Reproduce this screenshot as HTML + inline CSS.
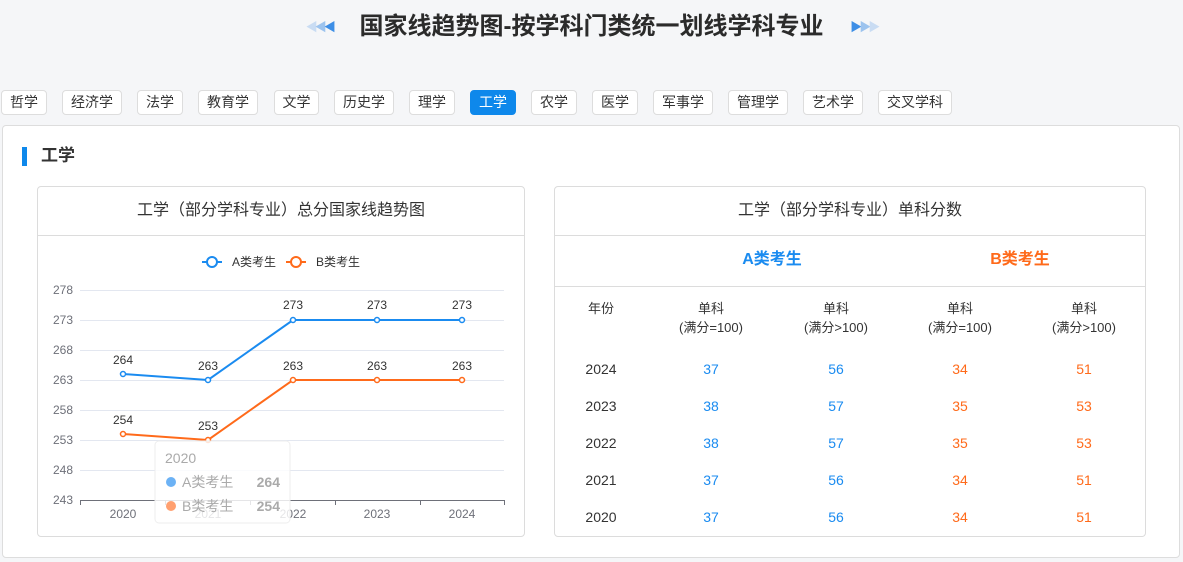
<!DOCTYPE html>
<html><head><meta charset="utf-8"><style>
*{margin:0;padding:0;box-sizing:border-box}
body{width:1183px;height:562px;background:#f5f6f8;font-family:"Liberation Sans","Noto Sans CJK SC",sans-serif;color:#333;position:relative;overflow:hidden}
.a{position:absolute;white-space:nowrap}
.title{left:0;width:1183px;top:12px;text-align:center;font-size:24px;font-weight:bold;color:#2b2b2b;line-height:30px}
.tab{position:absolute;top:90px;height:25px;border:1px solid #ddd;border-radius:4px;background:#fff;font-size:14px;line-height:23px;text-align:center;color:#333}
.tab.on{background:#0e88eb;border-color:#0e88eb;color:#fff}
.card{left:2px;top:125px;width:1178px;height:433px;background:#fff;border:1px solid #ddd;border-radius:4px}
.panel{background:#fff;border:1px solid #dcdcdc;border-radius:4px}
.c{text-align:center;transform:translateX(-50%)}
.bl{color:#1a8bf0}.or{color:#ff6a1a}
</style></head><body>
<div class="a title"><span style="font-size:12px;letter-spacing:-3px;vertical-align:3px"><span style="color:#c9dcf3">◀</span><span style="color:#9cc3ee">◀</span><span style="color:#3d8ee6">◀</span></span>&nbsp;&nbsp;&nbsp;&nbsp;国家线趋势图-按学科门类统一划线学科专业&nbsp;&nbsp;&nbsp;&nbsp;<span style="font-size:12px;letter-spacing:-3px;vertical-align:3px"><span style="color:#3d8ee6">▶</span><span style="color:#9cc3ee">▶</span><span style="color:#c9dcf3">▶</span></span></div>

<div class="tab" style="left:1px;width:46px">哲学</div>
<div class="tab" style="left:62px;width:60px">经济学</div>
<div class="tab" style="left:137px;width:46px">法学</div>
<div class="tab" style="left:198px;width:60px">教育学</div>
<div class="tab" style="left:274px;width:45px">文学</div>
<div class="tab" style="left:334px;width:60px">历史学</div>
<div class="tab" style="left:409px;width:46px">理学</div>
<div class="tab on" style="left:470px;width:46px">工学</div>
<div class="tab" style="left:531px;width:46px">农学</div>
<div class="tab" style="left:592px;width:46px">医学</div>
<div class="tab" style="left:653px;width:60px">军事学</div>
<div class="tab" style="left:728px;width:60px">管理学</div>
<div class="tab" style="left:803px;width:60px">艺术学</div>
<div class="tab" style="left:878px;width:74px">交叉学科</div>

<div class="a card"></div>
<div class="a" style="left:22px;top:147px;width:5px;height:19px;background:#0e88eb"></div>
<div class="a" style="left:41px;top:145px;font-size:17px;font-weight:bold;line-height:22px">工学</div>

<div class="a panel" style="left:37px;top:186px;width:488px;height:351px"></div>
<div class="a" style="left:38px;top:235px;width:486px;height:1px;background:#dcdcdc"></div>
<div class="a c" style="left:281px;top:200px;font-size:16px;line-height:22px;color:#333">工学（部分学科专业）总分国家线趋势图</div>

<svg class="a" style="left:0;top:0" width="560" height="562" font-family="Liberation Sans, Noto Sans CJK SC, sans-serif">
<g stroke="#e3e7f0" stroke-width="1">
<line x1="80" x2="504" y1="290.5" y2="290.5"/><line x1="80" x2="504" y1="320.5" y2="320.5"/><line x1="80" x2="504" y1="350.5" y2="350.5"/><line x1="80" x2="504" y1="380.5" y2="380.5"/><line x1="80" x2="504" y1="410.5" y2="410.5"/><line x1="80" x2="504" y1="440.5" y2="440.5"/><line x1="80" x2="504" y1="470.5" y2="470.5"/>
</g>
<g stroke="#6e7079" stroke-width="1"><line x1="80" x2="504" y1="500.5" y2="500.5"/>
<line x1="80.5" x2="80.5" y1="500" y2="505"/><line x1="165.5" x2="165.5" y1="500" y2="505"/><line x1="250.5" x2="250.5" y1="500" y2="505"/><line x1="335.5" x2="335.5" y1="500" y2="505"/><line x1="420.5" x2="420.5" y1="500" y2="505"/><line x1="504.5" x2="504.5" y1="500" y2="505"/></g>
<g font-size="12" fill="#6e7079" text-anchor="end">
<text x="73" y="294">278</text><text x="73" y="324">273</text><text x="73" y="354">268</text><text x="73" y="384">263</text><text x="73" y="414">258</text><text x="73" y="444">253</text><text x="73" y="474">248</text><text x="73" y="504">243</text></g>
<g font-size="12" fill="#6e7079" text-anchor="middle">
<text x="123" y="518">2020</text><text x="208" y="518">2021</text><text x="293" y="518">2022</text><text x="377" y="518">2023</text><text x="462" y="518">2024</text></g>
<polyline points="123,374 208,380 293,320 377,320 462,320" fill="none" stroke="#1a8bf0" stroke-width="2"/>
<polyline points="123,434 208,440 293,380 377,380 462,380" fill="none" stroke="#ff6a1a" stroke-width="2"/>
<g fill="#fff" stroke="#1a8bf0" stroke-width="1.5"><circle cx="123" cy="374" r="2.5"/><circle cx="208" cy="380" r="2.5"/><circle cx="293" cy="320" r="2.5"/><circle cx="377" cy="320" r="2.5"/><circle cx="462" cy="320" r="2.5"/></g>
<g fill="#fff" stroke="#ff6a1a" stroke-width="1.5"><circle cx="123" cy="434" r="2.5"/><circle cx="208" cy="440" r="2.5"/><circle cx="293" cy="380" r="2.5"/><circle cx="377" cy="380" r="2.5"/><circle cx="462" cy="380" r="2.5"/></g>
<g font-size="12" fill="#333" text-anchor="middle">
<text x="123" y="364">264</text><text x="208" y="370">263</text><text x="293" y="309">273</text><text x="377" y="309">273</text><text x="462" y="309">273</text>
<text x="123" y="424">254</text><text x="208" y="430">253</text><text x="293" y="370">263</text><text x="377" y="370">263</text><text x="462" y="370">263</text></g>
<line x1="202" x2="222" y1="262" y2="262" stroke="#1a8bf0" stroke-width="2"/><circle cx="212" cy="262" r="5" fill="#fff" stroke="#1a8bf0" stroke-width="2"/>
<text x="232" y="266" font-size="12" fill="#333">A类考生</text>
<line x1="286" x2="306" y1="262" y2="262" stroke="#ff6a1a" stroke-width="2"/><circle cx="296" cy="262" r="5" fill="#fff" stroke="#ff6a1a" stroke-width="2"/>
<text x="316" y="266" font-size="12" fill="#333">B类考生</text>
<rect x="155" y="441" width="135" height="82" rx="4" fill="#fff" fill-opacity="0.82" stroke="#eee"/>
<text x="165" y="463" font-size="14" fill="#aaa">2020</text>
<circle cx="171" cy="482" r="5" fill="#6cb2f5"/><text x="182" y="487" font-size="14" fill="#aaa">A类考生</text><text x="280" y="487" font-size="14" font-weight="bold" fill="#aaa" text-anchor="end">264</text>
<circle cx="171" cy="506" r="5" fill="#ffa070"/><text x="182" y="511" font-size="14" fill="#aaa">B类考生</text><text x="280" y="511" font-size="14" font-weight="bold" fill="#aaa" text-anchor="end">254</text>
</svg>

<div class="a panel" style="left:554px;top:186px;width:592px;height:351px"></div>
<div class="a" style="left:555px;top:235px;width:590px;height:1px;background:#dcdcdc"></div>
<div class="a" style="left:555px;top:286px;width:590px;height:1px;background:#dcdcdc"></div>
<div class="a c" style="left:850px;top:200px;font-size:16px;line-height:22px">工学（部分学科专业）单科分数</div>
<div class="a c bl" style="left:772px;top:249px;font-size:16px;font-weight:bold;line-height:22px">A类考生</div>
<div class="a c or" style="left:1020px;top:249px;font-size:16px;font-weight:bold;line-height:22px">B类考生</div>

<div class="a c" style="left:601px;top:299px;font-size:13px;line-height:19px">年份</div>
<div class="a c" style="left:711px;top:299px;font-size:13px;line-height:19px">单科<br>(满分=100)</div>
<div class="a c" style="left:836px;top:299px;font-size:13px;line-height:19px">单科<br>(满分&gt;100)</div>
<div class="a c" style="left:960px;top:299px;font-size:13px;line-height:19px">单科<br>(满分=100)</div>
<div class="a c" style="left:1084px;top:299px;font-size:13px;line-height:19px">单科<br>(满分&gt;100)</div>

<div style="font-size:14px;line-height:18px">
<div class="a c" style="left:601px;top:360px">2024</div><div class="a c bl" style="left:711px;top:360px">37</div><div class="a c bl" style="left:836px;top:360px">56</div><div class="a c or" style="left:960px;top:360px">34</div><div class="a c or" style="left:1084px;top:360px">51</div>
<div class="a c" style="left:601px;top:397px">2023</div><div class="a c bl" style="left:711px;top:397px">38</div><div class="a c bl" style="left:836px;top:397px">57</div><div class="a c or" style="left:960px;top:397px">35</div><div class="a c or" style="left:1084px;top:397px">53</div>
<div class="a c" style="left:601px;top:434px">2022</div><div class="a c bl" style="left:711px;top:434px">38</div><div class="a c bl" style="left:836px;top:434px">57</div><div class="a c or" style="left:960px;top:434px">35</div><div class="a c or" style="left:1084px;top:434px">53</div>
<div class="a c" style="left:601px;top:471px">2021</div><div class="a c bl" style="left:711px;top:471px">37</div><div class="a c bl" style="left:836px;top:471px">56</div><div class="a c or" style="left:960px;top:471px">34</div><div class="a c or" style="left:1084px;top:471px">51</div>
<div class="a c" style="left:601px;top:508px">2020</div><div class="a c bl" style="left:711px;top:508px">37</div><div class="a c bl" style="left:836px;top:508px">56</div><div class="a c or" style="left:960px;top:508px">34</div><div class="a c or" style="left:1084px;top:508px">51</div>
</div>
</body></html>
